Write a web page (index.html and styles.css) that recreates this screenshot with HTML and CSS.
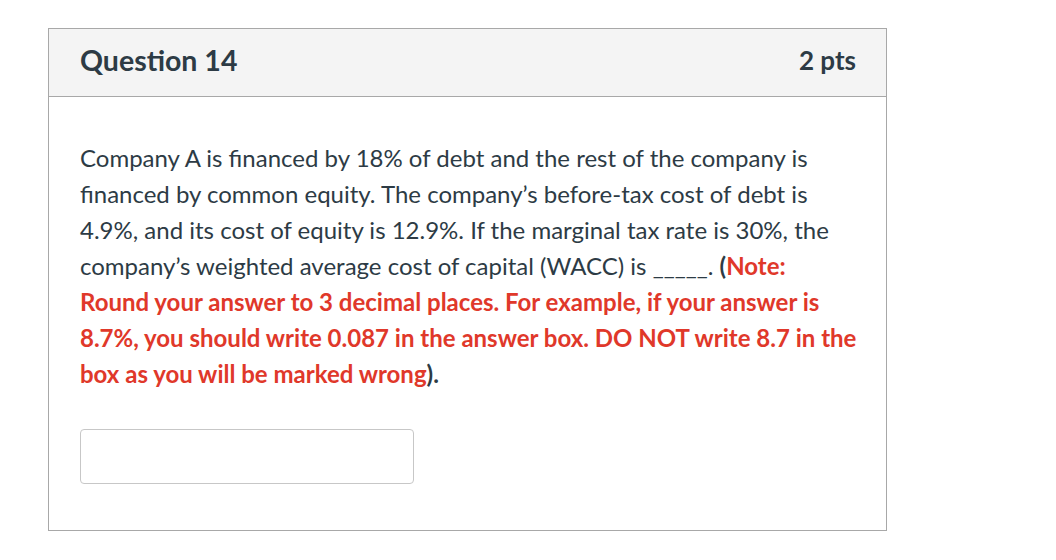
FILE: index.html
```html
<!DOCTYPE html>
<html>
<head>
<meta charset="utf-8">
<link rel="stylesheet" href="styles.css">
</head>
<body>
<div class="card">
  <div class="card-header">
    <h2 class="title">Question 14</h2>
    <div class="points">2 pts</div>
  </div>
  <div class="card-body">
    <p class="question">Company A is financed by 18% of debt and the rest of the company is financed by common equity. The company’s before-tax cost of debt is 4.9%, and its cost of equity is 12.9%. If the marginal tax rate is 30%, the company’s weighted average cost of capital (WACC) is _____. <strong>(<span class="note">Note: Round your answer to 3 decimal places. For example, if your answer is 8.7%, you should write 0.087 in the answer box. DO NOT write 8.7 in the box as you will be marked wrong</span>).</strong></p>
    <input class="answer" type="text">
  </div>
</div>
</body>
</html>
```
FILE: styles.css
```css
html, body {
  margin: 0;
  padding: 0;
  background: #ffffff;
}
body {
  font-family: Lato, "Noto Sans", sans-serif;
  color: #2d3b45;
  padding: 28px 0 0 48px;
}
.card {
  width: 839px;
  border: 1px solid #a8a8a8;
  box-sizing: border-box;
}
.card-header {
  display: flex;
  align-items: center;
  justify-content: space-between;
  height: 68px;
  box-sizing: border-box;
  background: #f4f4f4;
  border-bottom: 1px solid #a8a8a8;
  padding: 0 30px 6px 31px;
}
.title {
  margin: 0;
  font-size: 28.5px;
  font-weight: 700;
  color: #2d3b45;
}
.points {
  font-size: 26px;
  font-weight: 700;
  color: #2d3b45;
}
.card-body {
  padding: 43px 28px 46px 31px;
}
.question {
  margin: 0;
  font-size: 24px;
  line-height: 36px;
}
.question strong {
  font-weight: 700;
}
.note {
  color: #e0382a;
}
.answer {
  display: block;
  margin-top: 37px;
  width: 334px;
  height: 55px;
  box-sizing: border-box;
  border: 1px solid #c7c7c7;
  border-radius: 4px;
  background: #fff;
  font-family: inherit;
  font-size: 16px;
  padding: 0 10px;
}
```
